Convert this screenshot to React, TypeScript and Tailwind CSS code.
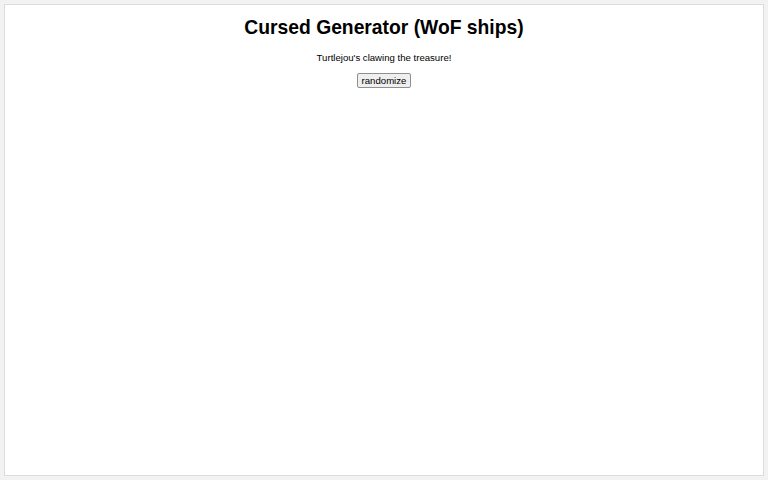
import React, { useState } from 'react'

const names = ['Turtlejou', 'Gloryclaw', 'Sunnystar', 'Tsunamiri']
const actions = ['clawing the treasure!', 'stealing the scrolls!', 'reading the books!']

export default function App() {
  const [line, setLine] = useState("Turtlejou's clawing the treasure!")

  const randomize = () => {
    const n = names[Math.floor(Math.random() * names.length)]
    const a = actions[Math.floor(Math.random() * actions.length)]
    setLine(`${n}'s ${a}`)
  }

  return (
    <div className="w-[768px] h-[480px] bg-[#f2f2f2] p-[4px] font-['Liberation_Sans',Arial,sans-serif]">
      <div className="h-[472px] bg-white border border-[#dcdcdc] flex flex-col items-center text-black">
        <h1 className="mt-[11px] text-[19.3px] font-bold leading-[24px]">Cursed Generator (WoF ships)</h1>
        <p className="mt-[12px] text-[9.6px] leading-[12px]">{line}</p>
        <button
          onClick={randomize}
          className="mt-[9px] px-[4px] text-[9.6px] leading-[12px] h-[15px] bg-[#efefef] border border-[#8f8f8f] rounded-[2px] hover:bg-[#e5e5e5]"
        >
          randomize
        </button>
      </div>
    </div>
  )
}
